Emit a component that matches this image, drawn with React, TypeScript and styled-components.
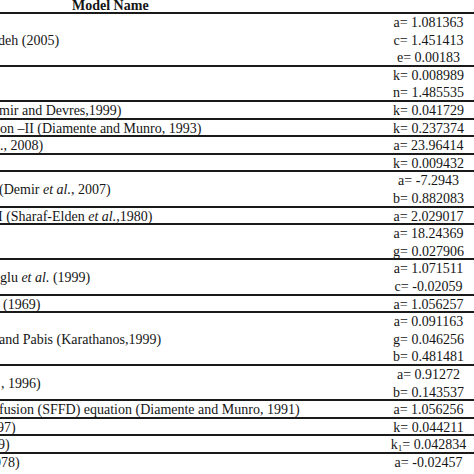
import React from "react";
import styled, { createGlobalStyle } from "styled-components";

const UNIT = 17.6;

const Global = createGlobalStyle`
  html, body {
    margin: 0;
    padding: 0;
    background: #ffffff;
    overflow: hidden;
  }
  body {
    font-family: "Liberation Serif", "Times New Roman", serif;
    color: #151515;
  }
`;

const Table = styled.div`
  width: 474px;
  display: flex;
  flex-direction: column;
  font-size: 14px;
  line-height: ${UNIT}px;
`;

const Rule = `
  background-image: linear-gradient(#1a1a1a, #1a1a1a);
  background-size: 100% 2px;
  background-position: bottom left;
  background-repeat: no-repeat;
`;

const HeaderRow = styled.div`
  height: 14px;
  display: grid;
  grid-template-columns: 1fr 91px;
  ${Rule}
`;

const HeaderName = styled.div`
  padding-left: 72px;
  font-weight: bold;
  line-height: 12px;
  white-space: nowrap;
`;

const Row = styled.div<{ $lines: number; $open?: boolean }>`
  height: ${(p) => p.$lines * UNIT}px;
  display: grid;
  grid-template-columns: 1fr 91px;
  ${(p) => (p.$open ? "" : Rule)}
`;

const NameCell = styled.div`
  display: flex;
  align-items: center;
  overflow: hidden;
  white-space: nowrap;
`;

const NameText = styled.span<{ $cut: number }>`
  margin-left: ${(p) => p.$cut}px;
`;

const ValueCell = styled.div`
  display: flex;
  flex-direction: column;
  text-align: center;
  white-space: nowrap;
`;

const ValueLine = styled.div`
  height: ${UNIT}px;
`;

const Sub = styled.span`
  font-size: 9px;
  line-height: 0;
  vertical-align: -2px;
`;

type RowData = {
  name: React.ReactNode;
  cut?: number;
  values: React.ReactNode[];
  open?: boolean;
};

const rows: RowData[] = [
  { name: "deh (2005)", cut: -2, values: ["a= 1.081363", "c= 1.451413", "e= 0.00183"] },
  { name: "", values: ["k= 0.008989", "n= 1.485535"] },
  { name: "mir and Devres,1999)", cut: -1, values: ["k= 0.041729"] },
  { name: "on –II (Diamente and Munro, 1993)", cut: 0, values: ["k= 0.237374"] },
  { name: "., 2008)", cut: 0, values: ["a= 23.96414"] },
  { name: "", values: ["k= 0.009432"] },
  {
    name: (
      <>
        (Demir <i>et al.</i>, 2007)
      </>
    ),
    cut: -1,
    values: ["a= -7.2943", "b= 0.882083"],
  },
  {
    name: (
      <>
        I (Sharaf-Elden <i>et al.</i>,1980)
      </>
    ),
    cut: -2,
    values: ["a= 2.029017"],
  },
  { name: "", values: ["a= 18.24369", "g= 0.027906"] },
  {
    name: (
      <>
        glu <i>et al.</i> (1999)
      </>
    ),
    cut: 0,
    values: ["a= 1.071511", "c= -0.02059"],
  },
  { name: "(1969)", cut: 3, values: ["a= 1.056257"] },
  {
    name: "and Pabis (Karathanos,1999)",
    cut: -1,
    values: ["a= 0.091163", "g= 0.046256", "b= 0.481481"],
  },
  { name: ", 1996)", cut: 1, values: ["a= 0.91272", "b= 0.143537"] },
  {
    name: "fusion (SFFD) equation (Diamente and Munro, 1991)",
    cut: -1,
    values: ["a= 1.056256"],
  },
  { name: "997)", cut: -10, values: ["k= 0.044211"] },
  { name: "99)", cut: -9, values: [<>k<Sub>1</Sub>= 0.042834</>] },
  { name: "978)", cut: -6, values: ["a= -0.02457"], open: true },
];

export default function App() {
  return (
    <>
      <Global />
      <Table>
        <HeaderRow>
          <HeaderName>Model Name</HeaderName>
          <div />
        </HeaderRow>
        {rows.map((r, i) => (
          <Row key={i} $lines={r.values.length} $open={r.open}>
            <NameCell>
              <NameText $cut={r.cut ?? 0}>{r.name}</NameText>
            </NameCell>
            <ValueCell>
              {r.values.map((v, j) => (
                <ValueLine key={j}>{v}</ValueLine>
              ))}
            </ValueCell>
          </Row>
        ))}
      </Table>
    </>
  );
}
